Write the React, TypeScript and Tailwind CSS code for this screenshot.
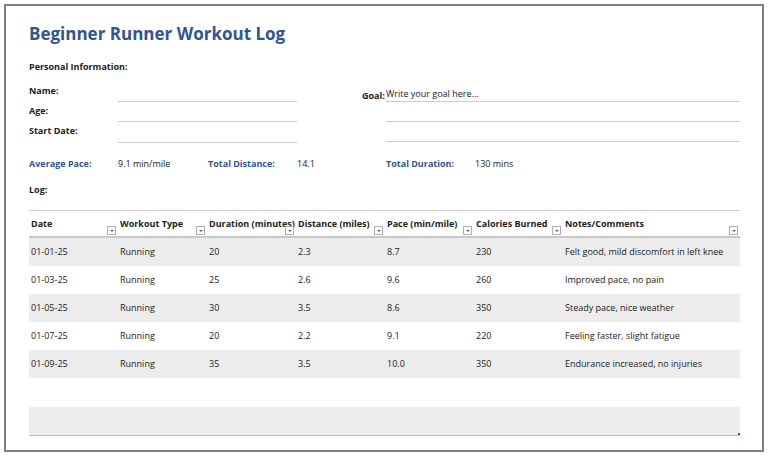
import React from "react";

const rows = [
  ["01-01-25", "Running", "20", "2.3", "8.7", "230", "Felt good, mild discomfort in left knee"],
  ["01-03-25", "Running", "25", "2.6", "9.6", "260", "Improved pace, no pain"],
  ["01-05-25", "Running", "30", "3.5", "8.6", "350", "Steady pace, nice weather"],
  ["01-07-25", "Running", "20", "2.2", "9.1", "220", "Feeling faster, slight fatigue"],
  ["01-09-25", "Running", "35", "3.5", "10.0", "350", "Endurance increased, no injuries"],
];
const heads = ["Date", "Workout Type", "Duration (minutes)", "Distance (miles)", "Pace (min/mile)", "Calories Burned", "Notes/Comments"];
const cols = "grid grid-cols-[89px_89px_89px_89px_89px_89px_177px]";

function Drop() {
  return (
    <div className="absolute right-[2px] bottom-[1px] w-[9px] h-[9px] border border-[#b0b0b0] bg-white flex items-center justify-center">
      <div className="w-0 h-0 border-l-[2px] border-r-[2px] border-t-[2px] border-l-transparent border-r-transparent border-t-[#666]" />
    </div>
  );
}

export default function App() {
  return (
    <div className="w-[768px] h-[456px] bg-white p-[4px] text-[9px] text-[#222]" style={{ fontFamily: '"Open Sans", "Noto Sans", sans-serif' }}>
      <div className="w-[760px] h-[448px] border-2 border-[#7f7f7f] pl-[23px] pt-[16px]">
        <div className="text-[17px] font-bold text-[#2f5597] leading-[24px]">Beginner Runner Workout Log</div>
        <div className="font-bold mt-[15px] leading-[12px]">Personal Information:</div>
        <div className="flex mt-[12px]">
          <div className="w-[89px] font-bold leading-[12px]">
            <div className="h-[20px]">Name:</div>
            <div className="h-[20px]">Age:</div>
            <div>Start Date:</div>
          </div>
          <div className="w-[179px] pt-[16px]">
            <div className="h-[20px] border-t border-[#ccc]" />
            <div className="h-[21px] border-t border-[#ccc]" />
            <div className="border-t border-[#ccc]" />
          </div>
          <div className="w-[65px]" />
          <div className="flex flex-col">
            <div className="flex items-end h-[17px]">
              <span className="w-[24px] font-bold leading-[12px]">Goal:</span>
              <span className="w-[354px] border-b border-[#ccc] leading-[12px] pb-[1px]">Write your goal here...</span>
            </div>
            <div className="ml-[24px] w-[354px] h-[20px] border-b border-[#ccc]" />
            <div className="ml-[24px] w-[354px] h-[20px] border-b border-[#ccc]" />
          </div>
        </div>
        <div className="flex mt-[15px] leading-[12px]">
          <span className="w-[89px] font-bold text-[#2f5597]">Average Pace:</span>
          <span className="w-[90px]">9.1 min/mile</span>
          <span className="w-[89px] font-bold text-[#2f5597]">Total Distance:</span>
          <span className="w-[89px]">14.1</span>
          <span className="w-[89px] font-bold text-[#2f5597]">Total Duration:</span>
          <span>130 mins</span>
        </div>
        <div className="font-bold mt-[14px] leading-[12px]">Log:</div>
        <div className="mt-[14px] w-[711px] border-t border-[#ccc]">
          <div className={`${cols} h-[27px] border-b-2 border-[#c8c8c8]`}>
            {heads.map((h) => (
              <div key={h} className="relative font-bold pl-[2px] pt-[7px] leading-[12px] whitespace-nowrap">
                {h}
                <Drop />
              </div>
            ))}
          </div>
          {rows.map((r, i) => (
            <div key={i} className={`${cols} h-[28px] items-center ${i % 2 === 0 ? "bg-[#ececec]" : "bg-white"}`}>
              {r.map((c, j) => (
                <div key={j} className="pl-[2px] whitespace-nowrap">{c}</div>
              ))}
            </div>
          ))}
          <div className="h-[29px]" />
          <div className="h-[29px] bg-[#ececec] border-b border-[#bbb] relative">
            <div className="absolute right-0 bottom-0 w-[2px] h-[2px] bg-[#2f5597]" />
          </div>
        </div>
      </div>
    </div>
  );
}
